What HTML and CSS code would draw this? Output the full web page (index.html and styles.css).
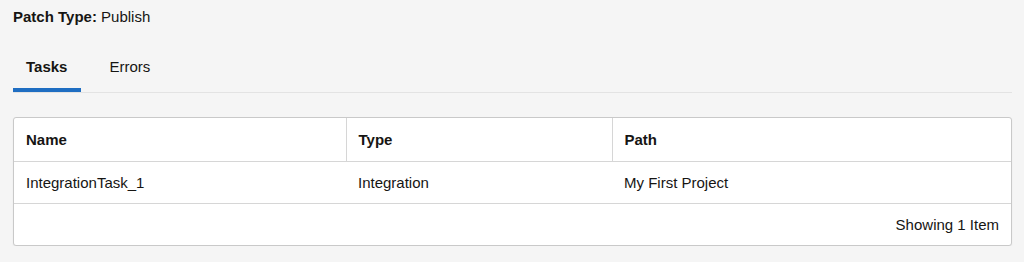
FILE: index.html
```html
<!DOCTYPE html>
<html lang="en">
<head>
<meta charset="utf-8">
<title>Patch</title>
<link rel="stylesheet" href="styles.css">
</head>
<body>
<div class="page">
  <div class="patch-type"><span class="label">Patch Type:</span> Publish</div>
  <div class="tabs">
    <div class="tab active">Tasks</div>
    <div class="tab">Errors</div>
  </div>
  <div class="table-card">
    <table class="grid">
      <colgroup>
        <col class="c-name">
        <col class="c-type">
        <col class="c-path">
      </colgroup>
      <thead>
        <tr>
          <th>Name</th>
          <th>Type</th>
          <th>Path</th>
        </tr>
      </thead>
      <tbody>
        <tr>
          <td>IntegrationTask_1</td>
          <td>Integration</td>
          <td>My First Project</td>
        </tr>
      </tbody>
    </table>
    <div class="footer">Showing 1 Item</div>
  </div>
</div>
</body>
</html>
```
FILE: styles.css
```css
html, body {
  margin: 0;
  padding: 0;
  background: #f5f5f5;
}
body {
  font-family: "Liberation Sans", Arial, Helvetica, sans-serif;
  font-size: 15px;
  color: #161513;
}
.page {
  padding: 7px 12px 0 13px;
}
.patch-type {
  line-height: 20px;
}
.label {
  font-weight: bold;
}
.tabs {
  display: flex;
  gap: 15px;
  margin-top: 17px;
  border-bottom: 1px solid #e3e3e3;
}
.tab {
  padding: 13px 14px 11px 13px;
  line-height: 20px;
  border-bottom: 4px solid transparent;
}
.tab.active {
  font-weight: bold;
  border-bottom-color: #1f6ec2;
}
.table-card {
  margin-top: 24px;
  background: #fff;
  border: 1px solid #c9c9c9;
  border-radius: 3px;
  box-shadow: 0 1px 2px rgba(0, 0, 0, 0.06);
}
.grid {
  width: 100%;
  border-collapse: collapse;
  table-layout: fixed;
}
.c-name { width: 332px; }
.c-type { width: 266px; }
th, td {
  text-align: left;
  padding: 0 12px;
  line-height: 18px;
}
th {
  font-weight: bold;
  padding-top: 13px;
  padding-bottom: 12px;
  border-bottom: 1px solid #d6d6d6;
  border-left: 1px solid #d6d6d6;
}
th:first-child {
  border-left: none;
}
td {
  padding-top: 12px;
  padding-bottom: 11px;
  border-bottom: 1px solid #d6d6d6;
}
.footer {
  text-align: right;
  padding: 12px 12px 11px;
  line-height: 18px;
}
```
